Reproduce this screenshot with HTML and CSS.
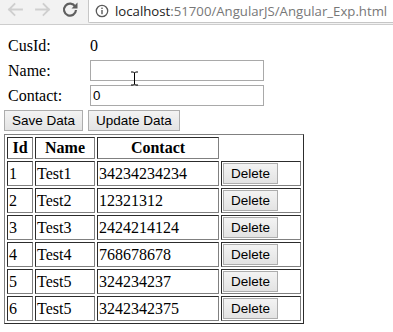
FILE: index.html
```html
<!DOCTYPE html>
<html lang="en">
<head>
  <meta charset="UTF-8">
  <meta name="viewport" content="width=device-width, initial-scale=1.0">
  <title>Angular_Exp</title>
  <link rel="stylesheet" href="styles.css">
</head>
<body>
  <!-- Browser toolbar -->
  <div class="toolbar">
    <svg class="nav-icon" width="80" height="20" viewBox="0 0 80 20">
      <g fill="none" stroke="#cfcfcf" stroke-width="1.8" stroke-linecap="square">
        <path d="M22 9.5H9M14.5 4 9 9.5l5.5 5.5"/>
        <path d="M36 9.5h13M43.5 4 49 9.5 43.5 15"/>
      </g>
      <g fill="none" stroke="#5f5f5f" stroke-width="2.2">
        <path d="M75.2 6.6A6 6 0 1 0 76 10"/>
      </g>
      <path d="M77.5 2.5v6h-6z" fill="#5f5f5f"/>
    </svg>
    <div class="address">
      <svg class="info" width="14" height="14" viewBox="0 0 14 14">
        <circle cx="7" cy="7" r="5.7" fill="none" stroke="#5a5a5a" stroke-width="1.3"/>
        <rect x="6.3" y="6" width="1.4" height="4.2" fill="#5a5a5a"/>
        <rect x="6.3" y="3.6" width="1.4" height="1.4" fill="#5a5a5a"/>
      </svg>
      <span class="host">localhost</span><span class="path">:51700/AngularJS/Angular_Exp.html</span>
    </div>
  </div>

  <main class="page">
    <div class="form-grid">
      <label>CusId:</label>
      <span>0</span>
      <label>Name:</label>
      <input type="text" value="">
      <label>Contact:</label>
      <input type="text" value="0">
    </div>

    <div class="actions">
      <button>Save Data</button>
      <button>Update Data</button>
    </div>

    <table class="customers">
      <tr>
        <th class="col-id">Id</th>
        <th class="col-name">Name</th>
        <th class="col-contact">Contact</th>
      </tr>
      <tr><td>1</td><td>Test1</td><td>34234234234</td><td class="col-action"><button>Delete</button></td></tr>
      <tr><td>2</td><td>Test2</td><td>12321312</td><td class="col-action"><button>Delete</button></td></tr>
      <tr><td>3</td><td>Test3</td><td>2424214124</td><td class="col-action"><button>Delete</button></td></tr>
      <tr><td>4</td><td>Test4</td><td>768678678</td><td class="col-action"><button>Delete</button></td></tr>
      <tr><td>5</td><td>Test5</td><td>324234237</td><td class="col-action"><button>Delete</button></td></tr>
      <tr><td>6</td><td>Test5</td><td>3242342375</td><td class="col-action"><button>Delete</button></td></tr>
    </table>

    <!-- mouse cursor -->
    <svg class="cursor" width="9" height="15" viewBox="0 0 9 15">
      <path d="M1 1h2.5L4.5 2 5.5 1H8M4.5 2v11M1 14h2.5l1-1 1 1H8" fill="none" stroke="#000" stroke-width="1"/>
    </svg>
  </main>
</body>
</html>
```

FILE: styles.css
```css
body {
  margin: 0;
  font-family: "Liberation Serif", "Times New Roman", serif;
  font-size: 16px;
  color: #000;
  background: #fff;
}

.toolbar {
  display: flex;
  height: 24px;
  background: #f2f2f2;
  border-bottom: 1px solid #cdcdcd;
}
.nav-icon {
  flex: none;
}
.address {
  flex: 1;
  display: flex;
  align-items: center;
  height: 22px;
  margin-left: 8px;
  margin-top: -1px;
  padding-left: 6px;
  background: #fff;
  border: 1px solid #c6c6c6;
  border-right: none;
  border-radius: 0 0 0 2px;
  font-family: "Open Sans", "Noto Sans", sans-serif;
  font-size: 13.2px;
  white-space: nowrap;
  overflow: hidden;
}
.info {
  flex: none;
  margin-right: 6px;
}
.host {
  color: #222;
}
.path {
  color: #777;
}

.page {
  position: relative;
  padding: 11px 4px 0;
}

.form-grid {
  display: grid;
  grid-template-columns: 82px auto;
  grid-auto-rows: 21px;
  grid-template-rows: 20px;
  row-gap: 4px;
  align-items: center;
  padding-left: 4px;
  justify-items: start;
}
.form-grid input {
  box-sizing: border-box;
  width: 174px;
  height: 21px;
  margin: 0;
  padding: 1px 2px;
  border: 1px solid #a9a9a9;
  font-family: "Liberation Sans", Arial, sans-serif;
  font-size: 13.33px;
  color: #000;
}

.actions {
  display: flex;
  gap: 5px;
  margin-top: 4px;
}
button {
  box-sizing: border-box;
  height: 21px;
  margin: 0;
  padding: 0 7px;
  border: 1px solid #adadad;
  border-radius: 0;
  background: linear-gradient(#f3f3f3, #e3e3e3);
  font-family: "Liberation Sans", Arial, sans-serif;
  font-size: 13.5px;
  color: #000;
}

.customers {
  margin-top: 3px;
  border: 1px outset #808080;
  border-spacing: 2px;
}
.customers th,
.customers td {
  box-sizing: border-box;
  padding: 1px;
  border: 1px inset #808080;
  text-align: left;
  vertical-align: middle;
}
.customers th {
  text-align: center;
  font-weight: bold;
}
.customers td {
  height: 25px;
}
.col-id { width: 26px; }
.col-name { width: 60px; }
.col-contact { width: 122px; }
.customers .col-action { width: 80px; }
.col-action button {
  width: 55px;
  display: block;
}

.cursor {
  position: absolute;
  left: 130px;
  top: 46px;
}
```
